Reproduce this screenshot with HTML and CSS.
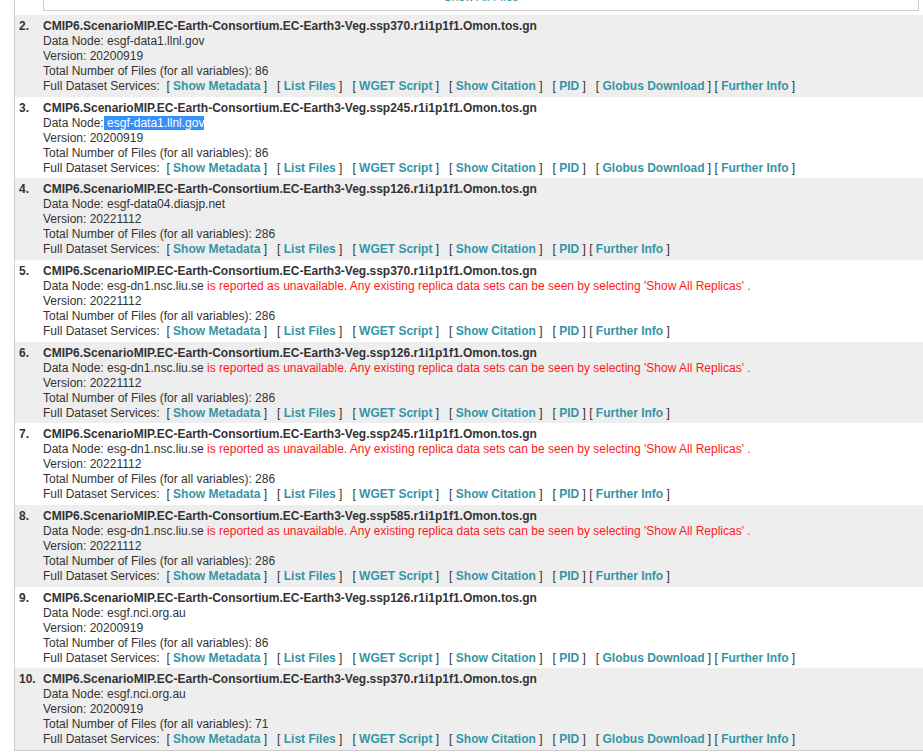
FILE: index.html
```html
<!DOCTYPE html>
<html>
<head>
<meta charset="utf-8">
<link rel="stylesheet" href="styles.css">
</head>
<body>
<div class="results">
  <div class="first">
    <div class="filesbox"><a class="lnk">Show All Files</a></div>
  </div>

  <div class="row alt">
    <div class="num">2.</div>
    <div class="body">
      <div class="title">CMIP6.ScenarioMIP.EC-Earth-Consortium.EC-Earth3-Veg.ssp370.r1i1p1f1.Omon.tos.gn</div>
      <div>Data Node: esgf-data1.llnl.gov</div>
      <div>Version: 20200919</div>
      <div>Total Number of Files (for all variables): 86</div>
      <div>Full Dataset Services:&nbsp;&nbsp;[ <a class="lnk">Show Metadata</a> ]&nbsp;&nbsp;&nbsp;[ <a class="lnk">List Files</a> ]&nbsp;&nbsp;&nbsp;[ <a class="lnk">WGET Script</a> ]&nbsp;&nbsp;&nbsp;[ <a class="lnk">Show Citation</a> ]&nbsp;&nbsp;&nbsp;[ <a class="lnk">PID</a> ]&nbsp;&nbsp;&nbsp;[ <a class="lnk">Globus Download</a> ] [ <a class="lnk">Further Info</a> ]</div>
    </div>
  </div>

  <div class="row">
    <div class="num">3.</div>
    <div class="body">
      <div class="title">CMIP6.ScenarioMIP.EC-Earth-Consortium.EC-Earth3-Veg.ssp245.r1i1p1f1.Omon.tos.gn</div>
      <div>Data Node:<span class="sel"> esgf-data1.llnl.gov</span></div>
      <div>Version: 20200919</div>
      <div>Total Number of Files (for all variables): 86</div>
      <div>Full Dataset Services:&nbsp;&nbsp;[ <a class="lnk">Show Metadata</a> ]&nbsp;&nbsp;&nbsp;[ <a class="lnk">List Files</a> ]&nbsp;&nbsp;&nbsp;[ <a class="lnk">WGET Script</a> ]&nbsp;&nbsp;&nbsp;[ <a class="lnk">Show Citation</a> ]&nbsp;&nbsp;&nbsp;[ <a class="lnk">PID</a> ]&nbsp;&nbsp;&nbsp;[ <a class="lnk">Globus Download</a> ] [ <a class="lnk">Further Info</a> ]</div>
    </div>
  </div>

  <div class="row alt">
    <div class="num">4.</div>
    <div class="body">
      <div class="title">CMIP6.ScenarioMIP.EC-Earth-Consortium.EC-Earth3-Veg.ssp126.r1i1p1f1.Omon.tos.gn</div>
      <div>Data Node: esgf-data04.diasjp.net</div>
      <div>Version: 20221112</div>
      <div>Total Number of Files (for all variables): 286</div>
      <div>Full Dataset Services:&nbsp;&nbsp;[ <a class="lnk">Show Metadata</a> ]&nbsp;&nbsp;&nbsp;[ <a class="lnk">List Files</a> ]&nbsp;&nbsp;&nbsp;[ <a class="lnk">WGET Script</a> ]&nbsp;&nbsp;&nbsp;[ <a class="lnk">Show Citation</a> ]&nbsp;&nbsp;&nbsp;[ <a class="lnk">PID</a> ] [ <a class="lnk">Further Info</a> ]</div>
    </div>
  </div>

  <div class="row">
    <div class="num">5.</div>
    <div class="body">
      <div class="title">CMIP6.ScenarioMIP.EC-Earth-Consortium.EC-Earth3-Veg.ssp370.r1i1p1f1.Omon.tos.gn</div>
      <div>Data Node: esg-dn1.nsc.liu.se <span class="warn">is reported as unavailable. Any existing replica data sets can be seen by selecting 'Show All Replicas' .</span></div>
      <div>Version: 20221112</div>
      <div>Total Number of Files (for all variables): 286</div>
      <div>Full Dataset Services:&nbsp;&nbsp;[ <a class="lnk">Show Metadata</a> ]&nbsp;&nbsp;&nbsp;[ <a class="lnk">List Files</a> ]&nbsp;&nbsp;&nbsp;[ <a class="lnk">WGET Script</a> ]&nbsp;&nbsp;&nbsp;[ <a class="lnk">Show Citation</a> ]&nbsp;&nbsp;&nbsp;[ <a class="lnk">PID</a> ] [ <a class="lnk">Further Info</a> ]</div>
    </div>
  </div>

  <div class="row alt">
    <div class="num">6.</div>
    <div class="body">
      <div class="title">CMIP6.ScenarioMIP.EC-Earth-Consortium.EC-Earth3-Veg.ssp126.r1i1p1f1.Omon.tos.gn</div>
      <div>Data Node: esg-dn1.nsc.liu.se <span class="warn">is reported as unavailable. Any existing replica data sets can be seen by selecting 'Show All Replicas' .</span></div>
      <div>Version: 20221112</div>
      <div>Total Number of Files (for all variables): 286</div>
      <div>Full Dataset Services:&nbsp;&nbsp;[ <a class="lnk">Show Metadata</a> ]&nbsp;&nbsp;&nbsp;[ <a class="lnk">List Files</a> ]&nbsp;&nbsp;&nbsp;[ <a class="lnk">WGET Script</a> ]&nbsp;&nbsp;&nbsp;[ <a class="lnk">Show Citation</a> ]&nbsp;&nbsp;&nbsp;[ <a class="lnk">PID</a> ] [ <a class="lnk">Further Info</a> ]</div>
    </div>
  </div>

  <div class="row">
    <div class="num">7.</div>
    <div class="body">
      <div class="title">CMIP6.ScenarioMIP.EC-Earth-Consortium.EC-Earth3-Veg.ssp245.r1i1p1f1.Omon.tos.gn</div>
      <div>Data Node: esg-dn1.nsc.liu.se <span class="warn">is reported as unavailable. Any existing replica data sets can be seen by selecting 'Show All Replicas' .</span></div>
      <div>Version: 20221112</div>
      <div>Total Number of Files (for all variables): 286</div>
      <div>Full Dataset Services:&nbsp;&nbsp;[ <a class="lnk">Show Metadata</a> ]&nbsp;&nbsp;&nbsp;[ <a class="lnk">List Files</a> ]&nbsp;&nbsp;&nbsp;[ <a class="lnk">WGET Script</a> ]&nbsp;&nbsp;&nbsp;[ <a class="lnk">Show Citation</a> ]&nbsp;&nbsp;&nbsp;[ <a class="lnk">PID</a> ] [ <a class="lnk">Further Info</a> ]</div>
    </div>
  </div>

  <div class="row alt">
    <div class="num">8.</div>
    <div class="body">
      <div class="title">CMIP6.ScenarioMIP.EC-Earth-Consortium.EC-Earth3-Veg.ssp585.r1i1p1f1.Omon.tos.gn</div>
      <div>Data Node: esg-dn1.nsc.liu.se <span class="warn">is reported as unavailable. Any existing replica data sets can be seen by selecting 'Show All Replicas' .</span></div>
      <div>Version: 20221112</div>
      <div>Total Number of Files (for all variables): 286</div>
      <div>Full Dataset Services:&nbsp;&nbsp;[ <a class="lnk">Show Metadata</a> ]&nbsp;&nbsp;&nbsp;[ <a class="lnk">List Files</a> ]&nbsp;&nbsp;&nbsp;[ <a class="lnk">WGET Script</a> ]&nbsp;&nbsp;&nbsp;[ <a class="lnk">Show Citation</a> ]&nbsp;&nbsp;&nbsp;[ <a class="lnk">PID</a> ] [ <a class="lnk">Further Info</a> ]</div>
    </div>
  </div>

  <div class="row">
    <div class="num">9.</div>
    <div class="body">
      <div class="title">CMIP6.ScenarioMIP.EC-Earth-Consortium.EC-Earth3-Veg.ssp126.r1i1p1f1.Omon.tos.gn</div>
      <div>Data Node: esgf.nci.org.au</div>
      <div>Version: 20200919</div>
      <div>Total Number of Files (for all variables): 86</div>
      <div>Full Dataset Services:&nbsp;&nbsp;[ <a class="lnk">Show Metadata</a> ]&nbsp;&nbsp;&nbsp;[ <a class="lnk">List Files</a> ]&nbsp;&nbsp;&nbsp;[ <a class="lnk">WGET Script</a> ]&nbsp;&nbsp;&nbsp;[ <a class="lnk">Show Citation</a> ]&nbsp;&nbsp;&nbsp;[ <a class="lnk">PID</a> ]&nbsp;&nbsp;&nbsp;[ <a class="lnk">Globus Download</a> ] [ <a class="lnk">Further Info</a> ]</div>
    </div>
  </div>

  <div class="row alt">
    <div class="num">10.</div>
    <div class="body">
      <div class="title">CMIP6.ScenarioMIP.EC-Earth-Consortium.EC-Earth3-Veg.ssp370.r1i1p1f1.Omon.tos.gn</div>
      <div>Data Node: esgf.nci.org.au</div>
      <div>Version: 20200919</div>
      <div>Total Number of Files (for all variables): 71</div>
      <div>Full Dataset Services:&nbsp;&nbsp;[ <a class="lnk">Show Metadata</a> ]&nbsp;&nbsp;&nbsp;[ <a class="lnk">List Files</a> ]&nbsp;&nbsp;&nbsp;[ <a class="lnk">WGET Script</a> ]&nbsp;&nbsp;&nbsp;[ <a class="lnk">Show Citation</a> ]&nbsp;&nbsp;&nbsp;[ <a class="lnk">PID</a> ]&nbsp;&nbsp;&nbsp;[ <a class="lnk">Globus Download</a> ] [ <a class="lnk">Further Info</a> ]</div>
    </div>
  </div>
</div>
</body>
</html>
```
FILE: styles.css
```css
html, body {
  margin: 0;
  padding: 0;
  background: #ffffff;
}
body {
  font-family: "Liberation Sans", Arial, sans-serif;
  font-size: 12px;
  line-height: 15px;
  color: #333333;
}
.results {
  margin-left: 14px;
  border-left: 1px solid #cccccc;
  border-bottom: 1px solid #cccccc;
}
.row {
  display: grid;
  grid-template-columns: 28px 1fr;
  padding: 4px 4px 2.67px 0;
  background: #ffffff;
}
.row.alt {
  background: #eeeeee;
}
.first {
  display: flex;
  align-items: flex-end;
  height: 15px;
  box-sizing: border-box;
  padding: 0 4px 4px 28px;
  overflow: hidden;
}
.num {
  padding-left: 4px;
  font-weight: bold;
}
.title {
  font-weight: bold;
}
.filesbox {
  flex: 1;
  border: 1px solid #cccccc;
  border-top: none;
  text-align: center;
  padding-bottom: 5px;
}
.lnk {
  color: #3595a6;
  font-weight: bold;
  text-decoration: none;
}
.filesbox .lnk {
  font-weight: normal;
}
.warn {
  color: #ff1a1a;
}
.sel {
  background: #3390ff;
  color: #ffffff;
}
```
